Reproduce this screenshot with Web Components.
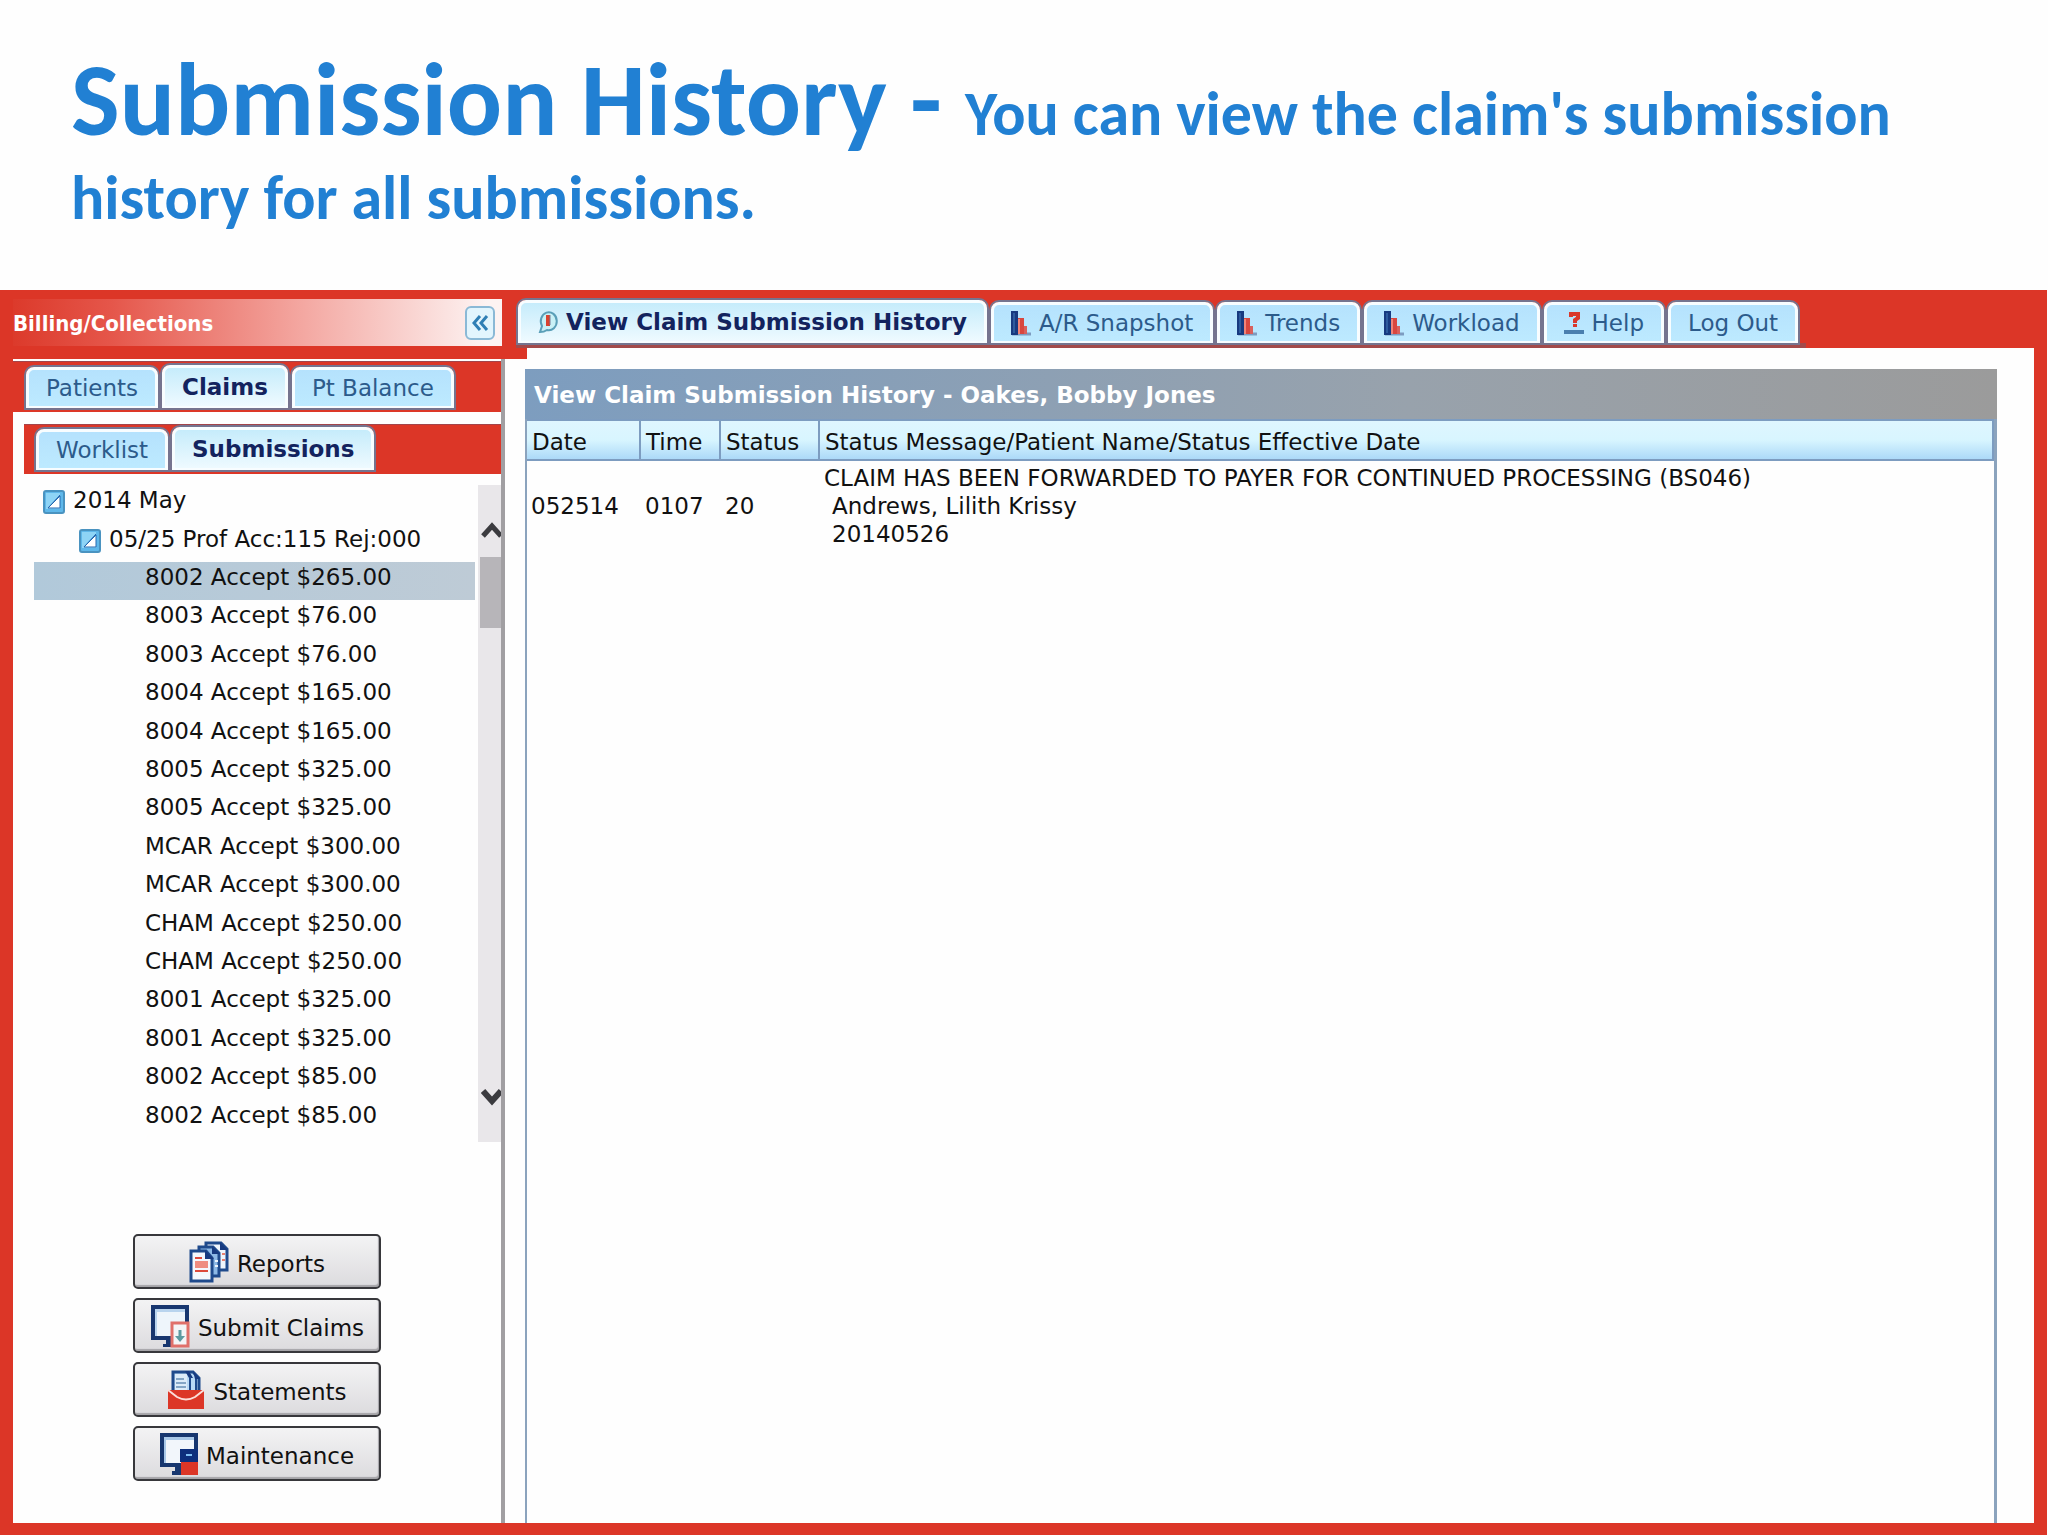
<!DOCTYPE html>
<html lang="en">
<head>
<meta charset="utf-8">
<title>Submission History</title>
<style>
  body {
    margin: 0;
    min-height: 100vh;
    display: flex;
    flex-direction: column;
    background: #fefefe;
    color: #111;
    font: 23px/28px "DejaVu Sans", Tahoma, sans-serif;
  }
</style>
</head>
<body>
<slide-title>
  <span slot="lead">Submission History -</span>
  <span>You can view the claim's submission</span>
  <span>history for all submissions.</span>
</slide-title>
<billing-app></billing-app>

<script>
  const ICONS = {
    info: `<svg width="20" height="24" viewBox="0 0 20 24"><path d="M2 22l2-6a8 9 0 1 1 5 4q-3 2-7 2z" fill="#c9f1f6" stroke="#5a9fb8" stroke-width="2"/><path d="M10 5v11" stroke="#d9432f" stroke-width="4"/><path d="M12 5v10" stroke="#7b7b94" stroke-width="1"/></svg>`,
    chart: `<svg width="20" height="26" viewBox="0 0 20 26"><path d="M1 24h19" stroke="#7d9cc0" stroke-width="3"/><path d="M0 1h7v24H0z" fill="#173a80"/><path d="M2 3h2v20H2z" fill="#2d5b9e"/><path d="M7 8h6v16H7z" fill="#d8473f"/><path d="M7 9h2v15H7z" fill="#f08478"/><path d="M13 16h3v8h-3z" fill="#d9605c"/></svg>`,
    help: `<svg width="20" height="24" viewBox="0 0 20 24"><path d="M7 6V3h7v4l-3 2v3" fill="none" stroke="#d9382c" stroke-width="4"/><path d="M9 13h4v3H9z" fill="#d9382c"/><path d="M0 19h20v4H0z" fill="#4a7fae"/></svg>`,
    reports: `<svg width="40" height="42" viewBox="0 0 40 42"><g stroke="#1f4a8c" stroke-width="3"><path d="M17 2h15l6 6v21H17z" fill="#eef5fc"/><path d="M10 6h14l6 6v23H10z" fill="#8db9e6"/><path d="M2 10h15l6 7v23H2z" fill="#f4f8fd"/></g><path d="M31 1l8 8h-8zM23 5l8 8h-8zM16 9l9 9h-9z" fill="#173a80"/><path d="M33 13h3M33 19h3" stroke="#e8806f" stroke-width="2"/><path d="M26 20h3M26 25h3" stroke="#eef5fc" stroke-width="2"/><path d="M6 17h7M6 30h13" stroke="#dc4a3c" stroke-width="2"/><path d="M6 20h13v7H6z" fill="#ef8d80"/></svg>`,
    submit: `<svg width="40" height="44" viewBox="0 0 40 44"><path d="M3 3h34v31H3z" fill="#eef5fb" stroke="#17366f" stroke-width="4"/><path d="M5 5h30v3H5zM5 5h2v27H5z" fill="#b9d4ee"/><path d="M16 34h8v6h-3v3h-8v-3h3z" fill="#17366f"/><path d="M22 19h16v23H22z" fill="#f4f4f6" stroke="#e0706a" stroke-width="3"/><path d="M30 26v9" stroke="#5d9aa0" stroke-width="3"/><path d="M25 32h10l-5 6z" fill="#5d9aa0"/></svg>`,
    statements: `<svg width="38" height="40" viewBox="0 0 38 40"><path d="M6 2h20l6 6v20H6z" fill="#b9d9f5" stroke="#1f4a8c" stroke-width="3"/><path d="M8 4h12v18H8z" fill="#dcebf9"/><path d="M18 1h4l4 7h-4zM26 1l7 8h-5z" fill="#173a80"/><path d="M23 7v16M29 9v14" stroke="#1f4a8c" stroke-width="2"/><path d="M9 9h8M9 13h10M9 17h10" stroke="#84a5c6" stroke-width="2"/><path d="M1 20h36v19H1z" fill="#dc3627"/><path d="M1 20l9 7q9 5 18 0l9-7" fill="none" stroke="#fbdeda" stroke-width="2"/></svg>`,
    maintenance: `<svg width="38" height="44" viewBox="0 0 38 44"><path d="M2 3h34v30H2z" fill="#f2f6fb" stroke="#17366f" stroke-width="4"/><path d="M4 5h30v3H4zM4 5h2v26H4z" fill="#a9c8e8"/><path d="M15 33h8v6h-2v4h-9v-4h3z" fill="#17366f"/><path d="M20 17h18v13H20z" fill="#0d2f7c"/><path d="M26 23h6" stroke="#7ec0f4" stroke-width="2"/><path d="M21 30h17v13H21z" fill="#dc3627"/></svg>`,
    collapse: `<svg width="18" height="18" viewBox="0 0 18 18"><path d="M9 2L3 9l6 7M16 2l-6 7 6 7" fill="none" stroke="#2f7fb5" stroke-width="3"/></svg>`,
    node: `<svg width="22" height="24" viewBox="0 0 22 24"><rect x="1" y="1" width="20" height="22" rx="2" fill="#5fb8ea" stroke="#4a93c0" stroke-width="2"/><path d="M3 3h14v16H3z" fill="#8ed4f6"/><path d="M17 6v12H5z" fill="#fff"/><path d="M17 6v12H5zM5 18L17 5" fill="none" stroke="#2468b0" stroke-width="1"/></svg>`,
    up: `<svg width="20" height="20" viewBox="0 0 20 20"><path d="M2 15l9-10 9 10" fill="none" stroke="#3b3b3f" stroke-width="5"/></svg>`,
    down: `<svg width="20" height="20" viewBox="0 0 20 20"><path d="M2 3l9 10 9-10" fill="none" stroke="#3b3b3f" stroke-width="6"/></svg>`
  };

  class BaseElement extends HTMLElement {
    constructor() {
      super();
      this.attachShadow({ mode: "open" });
    }
    connectedCallback() {
      const template = document.createElement("template");
      template.innerHTML = `<style>${this.getStyles()}</style>${this.getTemplate()}`;
      this.shadowRoot.replaceChildren(template.content.cloneNode(true));
    }
  }

  class UiIcon extends BaseElement {
    getStyles() {
      return `
        :host { display: inline-flex; flex: none; }
        svg { display: block; }
      `;
    }
    getTemplate() {
      return ICONS[this.getAttribute("name")];
    }
  }

  class SlideTitle extends BaseElement {
    getStyles() {
      return `
        :host { display: block; flex: none; height: 290px; box-sizing: border-box; padding: 44px 72px 0 71px; }
        h1 { margin: 0; font: bold 62px/84px Carlito, Lato, sans-serif; color: #2180d3; }
        .lead { font-size: 103px; line-height: 112px; }
      `;
    }
    getTemplate() {
      return `<h1><span class="lead"><slot name="lead"></slot> </span><slot></slot></h1>`;
    }
  }

  class TabItem extends BaseElement {
    getStyles() {
      return `
        :host { display: flex; align-self: flex-end; height: 41px; }
        :host([active]) { height: 43px; }
        button {
          display: flex;
          align-items: center;
          gap: 8px;
          padding: 0 var(--tab-pad, 17px);
          border: 3px solid #f8fdff;
          border-bottom-width: 2px;
          border-radius: 8px 8px 0 0;
          background: linear-gradient(#b5e2fd, #bdeaff);
          box-shadow: 0 0 0 2px #75748f;
          color: #2c5b8b;
          font: inherit;
          white-space: nowrap;
        }
        :host([active]) button {
          background: linear-gradient(#c6ecfb, #eefaff);
          color: #13235e;
          font-weight: bold;
        }
      `;
    }
    getTemplate() {
      const icon = this.getAttribute("icon");
      return `
        <button type="button" role="tab" aria-selected="${this.hasAttribute("active")}">
          ${icon ? `<ui-icon name="${icon}"></ui-icon>` : ""}<slot></slot>
        </button>
      `;
    }
  }

  class TabStrip extends BaseElement {
    getStyles() {
      return `
        :host { display: flex; gap: 4px; overflow: hidden; box-sizing: border-box; background: #dc3627; }
        div { display: contents; }
      `;
    }
    getTemplate() {
      return `<div role="tablist"><slot></slot></div>`;
    }
  }

  class ClaimTree extends BaseElement {
    getStyles() {
      return `
        :host { display: flex; height: 657px; justify-content: space-between; }
        ul {
          list-style: none;
          flex: 1;
          display: flex;
          flex-direction: column;
          margin: 0 3px 4px 0;
          padding: 0;
        }
        li { flex: 1; display: flex; align-items: center; gap: 8px; padding: 0 0 8px 111px; box-sizing: border-box; white-space: nowrap; }
        li.month { padding-left: 9px; }
        li.batch { padding-left: 45px; }
        li.selected { background: linear-gradient(90deg, #b1c9da, #becbd6); }
        ui-icon { padding-top: 4px; }
        .rail {
          width: 23px;
          box-sizing: border-box;
          display: flex;
          flex-direction: column;
          padding: 36px 0 34px;
          background: #e9e7ea;
          overflow: hidden;
        }
        .rail ui-icon { padding: 0 0 0 3px; }
        .thumb { height: 71px; margin: 16px 0 auto 2px; background: #b7b5b9; }
      `;
    }
    getTemplate() {
      const claims = [
        "8002 Accept $265.00", "8003 Accept $76.00", "8003 Accept $76.00",
        "8004 Accept $165.00", "8004 Accept $165.00", "8005 Accept $325.00",
        "8005 Accept $325.00", "MCAR Accept $300.00", "MCAR Accept $300.00",
        "CHAM Accept $250.00", "CHAM Accept $250.00", "8001 Accept $325.00",
        "8001 Accept $325.00", "8002 Accept $85.00", "8002 Accept $85.00"
      ];
      return `
        <ul>
          <li class="month"><ui-icon name="node"></ui-icon>2014 May</li>
          <li class="batch"><ui-icon name="node"></ui-icon>05/25 Prof Acc:115 Rej:000</li>
          ${claims.map((c, i) => `<li${i === 0 ? ' class="selected"' : ""}>${c}</li>`).join("")}
        </ul>
        <div class="rail">
          <ui-icon name="up"></ui-icon>
          <div class="thumb"></div>
          <ui-icon name="down"></ui-icon>
        </div>
      `;
    }
  }

  class ToolButton extends BaseElement {
    getStyles() {
      return `
        :host { display: block; }
        button {
          width: 100%;
          height: 55px;
          display: flex;
          align-items: center;
          justify-content: center;
          gap: 8px;
          padding: 0;
          border: 2px solid #37373b;
          border-radius: 5px;
          background: linear-gradient(#f3f3f4, #dcdbde);
          box-shadow: inset -1px -2px 1px #a5a4a8;
          color: #111;
          font: inherit;
        }
        span { padding-top: 4px; }
      `;
    }
    getTemplate() {
      return `<button type="button"><ui-icon name="${this.getAttribute("icon")}"></ui-icon><span><slot></slot></span></button>`;
    }
  }

  class SidePanel extends BaseElement {
    getStyles() {
      return `
        :host {
          display: flex;
          flex-direction: column;
          width: 505px;
          box-sizing: border-box;
          padding: 9px 0 0 13px;
        }
        header {
          display: flex;
          align-items: center;
          justify-content: space-between;
          height: 47px;
          margin-right: 3px;
          padding-right: 7px;
          background: linear-gradient(90deg, #dc3a2b, #e5564a 20%, #f4a9a3 60%, #fdf3f2 97%);
        }
        h2 { margin: 0; padding-top: 2px; font: bold 22px/28px "DejaVu Sans Condensed", Tahoma, sans-serif; color: #fff; }
        header button {
          display: flex;
          align-items: center;
          justify-content: center;
          width: 30px;
          height: 34px;
          padding: 0;
          border: 2px solid #8ab9d6;
          border-radius: 6px;
          background: #e2f5fd;
        }
        .body {
          flex: 1;
          display: flex;
          flex-direction: column;
          margin-top: 13px;
          border-right: 4px solid #a19fa2;
          background: #fefefe;
        }
        .main-tabs { height: 51px; margin-top: 2px; padding: 0 0 4px 13px; border-top: 1px solid #a3444a; }
        .sub-tabs { height: 50px; margin: 12px 0 0 11px; padding: 0 0 4px 12px; border-top: 1px solid #a3444a; }
        claim-tree { margin: 11px 0 0 21px; }
        nav { width: 248px; display: grid; gap: 9px; margin: 92px 0 0 120px; }
      `;
    }
    getTemplate() {
      return `
        <header>
          <h2>Billing/Collections</h2>
          <button type="button" aria-label="Collapse panel"><ui-icon name="collapse"></ui-icon></button>
        </header>
        <div class="body">
          <tab-strip class="main-tabs">
            <tab-item>Patients</tab-item>
            <tab-item active>Claims</tab-item>
            <tab-item>Pt Balance</tab-item>
          </tab-strip>
          <tab-strip class="sub-tabs">
            <tab-item>Worklist</tab-item>
            <tab-item active>Submissions</tab-item>
          </tab-strip>
          <claim-tree></claim-tree>
          <nav>
            <tool-button icon="reports">Reports</tool-button>
            <tool-button icon="submit">Submit Claims</tool-button>
            <tool-button icon="statements">Statements</tool-button>
            <tool-button icon="maintenance">Maintenance</tool-button>
          </nav>
        </div>
      `;
    }
  }

  class ClaimHistory extends BaseElement {
    getStyles() {
      return `
        :host {
          display: flex;
          flex-direction: column;
          border: solid #8ba3bd;
          border-width: 0 3px 0 2px;
        }
        h2 {
          margin: 0 -3px 0 -2px;
          padding: 2px 9px 0;
          font-size: 23px;
          line-height: 48px;
          color: #fff;
          background: linear-gradient(90deg, #7d9dbf, #98a2ac 60%, #9b9b9b);
        }
        table { width: 100%; border-collapse: separate; border-spacing: 0; table-layout: fixed; }
        th {
          box-sizing: border-box;
          height: 42px;
          padding: 3px 0 0 5px;
          border: solid #7d9cc0;
          border-width: 2px 2px 2px 0;
          background: linear-gradient(#dff6ff, #d8f5ff 50%, #acd9f8);
          font-weight: normal;
          text-align: left;
          white-space: nowrap;
        }
        td { padding: 3px 0 0 4px; white-space: nowrap; }
        td span { display: block; padding-left: 8px; }
        .date { width: 114px; }
        .time { width: 80px; }
        .status { width: 99px; }
      `;
    }
    getTemplate() {
      return `
        <h2>View Claim Submission History - Oakes, Bobby Jones</h2>
        <table>
          <thead>
            <tr>
              <th class="date">Date</th>
              <th class="time">Time</th>
              <th class="status">Status</th>
              <th>Status Message/Patient Name/Status Effective Date</th>
            </tr>
          </thead>
          <tbody>
            <tr>
              <td>052514</td>
              <td>0107</td>
              <td>20</td>
              <td>CLAIM HAS BEEN FORWARDED TO PAYER FOR CONTINUED PROCESSING (BS046)
                <span>Andrews, Lilith Krissy</span>
                <span>20140526</span>
              </td>
            </tr>
          </tbody>
        </table>
      `;
    }
  }

  class BillingApp extends BaseElement {
    getStyles() {
      return `
        :host {
          flex: 1;
          display: grid;
          grid-template-columns: auto 1fr;
          margin-right: 1px;
          border: solid #dc3627;
          border-width: 0 13px 12px 0;
          background: #dc3627;
        }
        main { display: flex; flex-direction: column; min-width: 0; }
        .top-tabs {
          height: 58px;
          padding: 0 0 5px 13px;
          background: linear-gradient(#a34a4a, #a34a4a) 11px 100% / 1290px 5px no-repeat #dc3627;
        }
        .content {
          flex: 1;
          display: flex;
          flex-direction: column;
          padding: 21px 37px 0 20px;
          background: linear-gradient(#dc3627, #dc3627) 0 0 / 22px 11px no-repeat #fefefe;
        }
        claim-history { flex: 1; }
      `;
    }
    getTemplate() {
      return `
        <side-panel></side-panel>
        <main>
          <tab-strip class="top-tabs">
            <tab-item icon="info" active>View Claim Submission History</tab-item>
            <tab-item icon="chart">A/R Snapshot</tab-item>
            <tab-item icon="chart">Trends</tab-item>
            <tab-item icon="chart">Workload</tab-item>
            <tab-item icon="help">Help</tab-item>
            <tab-item>Log Out</tab-item>
          </tab-strip>
          <div class="content"><claim-history></claim-history></div>
        </main>
      `;
    }
  }

  customElements.define("ui-icon", UiIcon);
  customElements.define("slide-title", SlideTitle);
  customElements.define("tab-item", TabItem);
  customElements.define("tab-strip", TabStrip);
  customElements.define("claim-tree", ClaimTree);
  customElements.define("tool-button", ToolButton);
  customElements.define("side-panel", SidePanel);
  customElements.define("claim-history", ClaimHistory);
  customElements.define("billing-app", BillingApp);
</script>
</body>
</html>
